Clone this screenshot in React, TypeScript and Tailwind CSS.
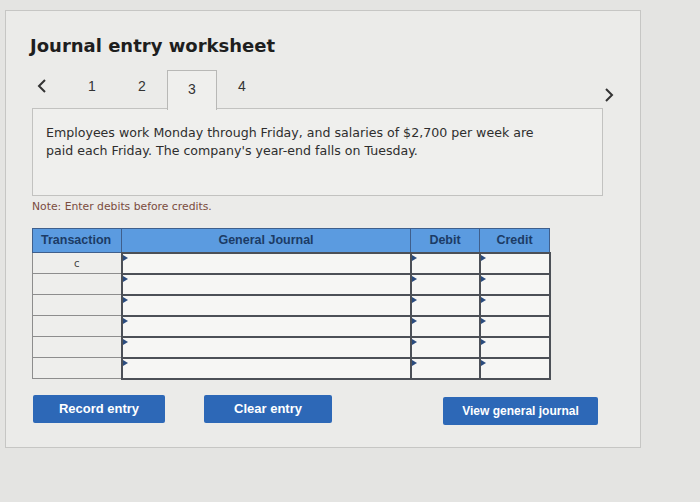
import React from "react";

const rows = ["c", "", "", "", "", ""];

function Marker() {
  return (
    <span className="absolute left-0 top-[1px] w-0 h-0 border-l-[5px] border-l-[#2b4c7e] border-y-[3px] border-y-transparent" />
  );
}

export default function App() {
  return (
    <div className="w-[700px] h-[502px] bg-[#e4e4e2] pt-[10px] overflow-hidden font-['DejaVu_Sans',sans-serif]">
      {/* worksheet panel */}
      <div className="ml-[5px] w-[636px] h-[438px] border border-[#c6c6c4] bg-[#ebebe9] pl-[26px] pt-[23px]">
        <h1 className="-ml-[2px] text-[18px] leading-[24px] font-bold text-[#1e1e1e]">
          Journal entry worksheet
        </h1>

        {/* tabs */}
        <div className="mt-[12px] w-[582px] h-[39px] flex items-stretch font-['Liberation_Sans',sans-serif]">
          <div className="w-[35px] flex items-center pl-[5px] pb-[8px]">
            <svg width="10" height="14" viewBox="0 0 10 14">
              <polyline points="8,1 2,7 8,13" fill="none" stroke="#333" strokeWidth="2" />
            </svg>
          </div>
          {["1", "2", "3", "4"].map((t) => (
            <div
              key={t}
              className={
                t === "3"
                  ? "relative z-10 w-[50px] h-[40px] border border-b-0 border-[#b8b8b6] bg-[#efefed] flex items-center justify-center pb-[3px] text-[14px] text-[#333]"
                  : "w-[50px] flex items-center justify-center pb-[6px] text-[14px] text-[#333]"
              }
            >
              {t}
            </div>
          ))}
          <div className="ml-auto flex items-end pb-[7px]">
            <svg width="10" height="14" viewBox="0 0 10 14">
              <polyline points="2,1 8,7 2,13" fill="none" stroke="#333" strokeWidth="2" />
            </svg>
          </div>
        </div>

        {/* question box */}
        <div className="-mt-px w-[571px] h-[88px] border border-[#c2c2c0] bg-[#efefed] pl-[13px] pt-[15px] text-[12.6px] leading-[18px] text-[#2e2e2e]">
          Employees work Monday through Friday, and salaries of $2,700 per week are
          <br />
          paid each Friday. The company's year-end falls on Tuesday.
        </div>

        <p className="mt-[4px] text-[10.8px] leading-[14px] text-[#7a4c3e]">
          Note: Enter debits before credits.
        </p>

        {/* journal table */}
        <table className="mt-[14px] border-collapse font-['Liberation_Sans',sans-serif]">
          <thead>
            <tr className="h-[24px] bg-[#5b9be0] text-[12.5px] font-bold text-[#1c3b66]">
              <th className="w-[89px] border border-[#3f5f8c] text-left pl-[8px] font-bold">Transaction</th>
              <th className="w-[289px] border border-[#3f5f8c] font-bold">General Journal</th>
              <th className="w-[69px] border border-[#3f5f8c] font-bold">Debit</th>
              <th className="w-[70px] border border-[#3f5f8c] font-bold">Credit</th>
            </tr>
          </thead>
          <tbody>
            {rows.map((r, i) => (
              <tr key={i} className="h-[21px]">
                <td className="border border-[#8d8d8d] bg-[#eeeeec] text-center text-[10px] text-[#444] font-['DejaVu_Sans',sans-serif]">
                  {r}
                </td>
                <td className="relative border-2 border-[#4c5057] bg-[#f6f6f4]">
                  <Marker />
                </td>
                <td className="relative border-2 border-[#4c5057] bg-[#f6f6f4]">
                  <Marker />
                </td>
                <td className="relative border-2 border-[#4c5057] bg-[#f6f6f4]">
                  <Marker />
                </td>
              </tr>
            ))}
          </tbody>
        </table>

        {/* actions */}
        <div className="mt-[15px] flex items-start font-['Liberation_Sans',sans-serif] font-bold text-white">
          <button className="ml-[1px] w-[132px] h-[28px] bg-[#2d68b7] rounded-[2px] text-[13px]">
            Record entry
          </button>
          <button className="ml-[39px] w-[128px] h-[28px] bg-[#2d68b7] rounded-[2px] text-[13px]">
            Clear entry
          </button>
          <button className="ml-[111px] mt-[2px] w-[155px] h-[28px] bg-[#2d68b7] rounded-[2px] text-[12px]">
            View general journal
          </button>
        </div>
      </div>
    </div>
  );
}
